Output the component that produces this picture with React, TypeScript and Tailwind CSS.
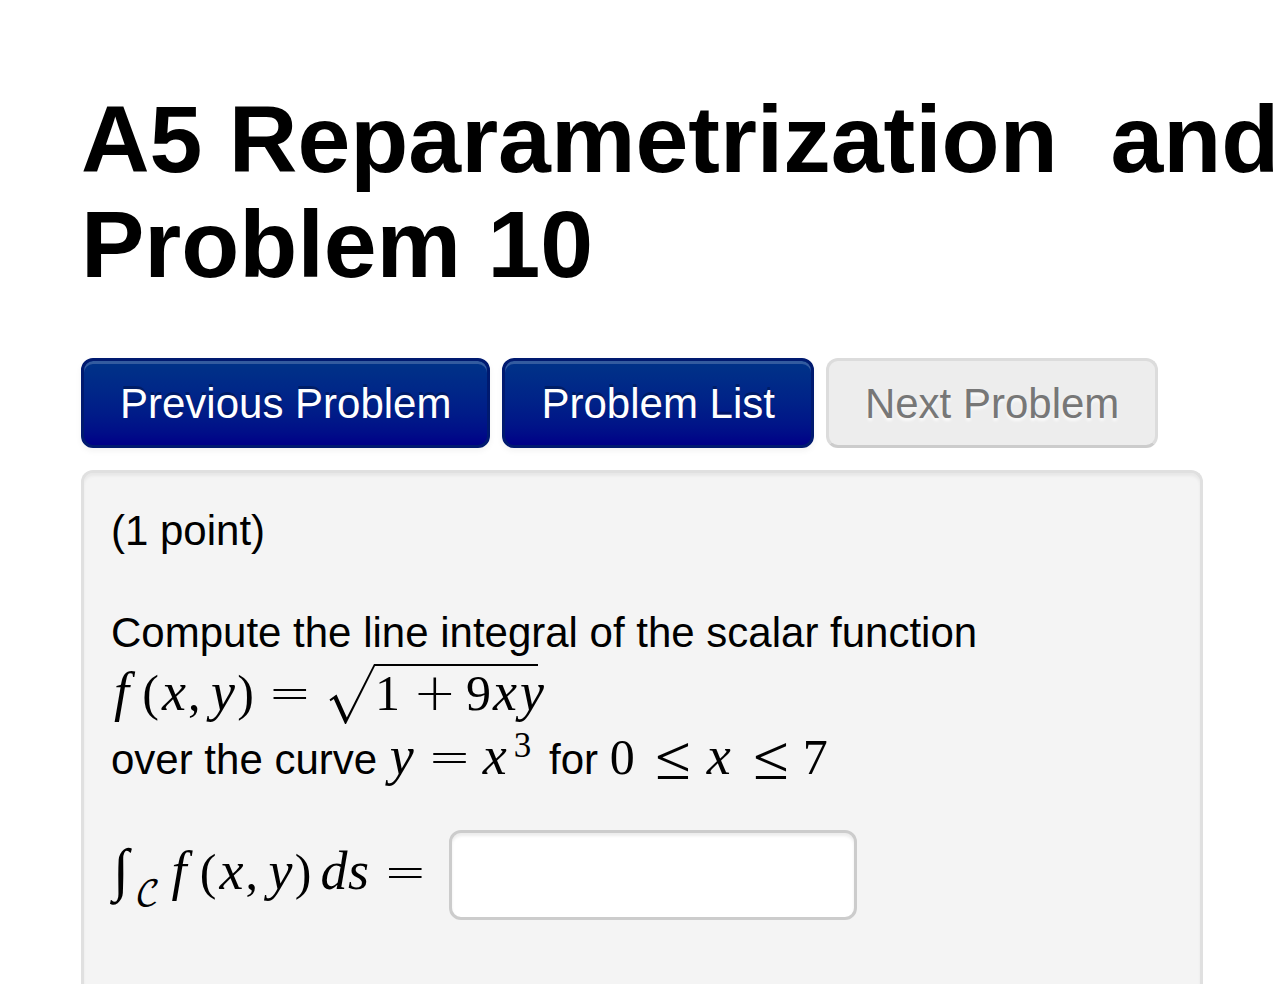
import type { ReactNode } from 'react';

const slots = {
  f: 'w-[30px] text-left pl-[3px]',
  x: 'w-[28px] text-center',
  y: 'w-[26px] text-center',
  d: 'w-[26px] text-center',
  s: 'w-[24px] text-center',
};

function Var({ name }: { name: keyof typeof slots }) {
  return <i className={`inline-block text-[54px] leading-none ${slots[name]}`}>{name}</i>;
}

function Paren({ children }: { children: ReactNode }) {
  return <span className="inline-block w-[19px] text-center">{children}</span>;
}

function Rel({ children }: { children: ReactNode }) {
  return (
    <span className="mx-[13px] inline-block w-[40px] text-center font-['DejaVu_Sans',sans-serif] text-[52px] font-extralight leading-none">
      {children}
    </span>
  );
}

function AtMost() {
  return (
    <span className="mx-[15px] inline-block w-[40px] text-center align-[-8px] font-['Inter',sans-serif] text-[72px] font-extralight leading-[30px]">
      ≤
    </span>
  );
}

function MathText({ children }: { children: ReactNode }) {
  return (
    <span className="inline-block whitespace-nowrap font-['Liberation_Serif',serif] text-[50px] leading-[60px]">
      {children}
    </span>
  );
}

function FunctionOfXY() {
  return (
    <>
      <Var name="f" />
      <Paren>(</Paren>
      <Var name="x" />
      <span className="inline-block w-[22px]">,</span>
      <Var name="y" />
      <Paren>)</Paren>
    </>
  );
}

function Root({ children }: { children: ReactNode }) {
  return (
    <span className="relative inline-block pl-[46px]">
      <svg
        className="absolute left-0 top-0 h-[62px] w-[48px]"
        viewBox="0 0 48 62"
        fill="currentColor"
        aria-hidden="true"
      >
        <path d="M0.500 36.500L7.500 31.500L17.800 54.500L45 1H47L17 61H16L4.800 36L1.500 38.200Z" />
      </svg>
      <span className="absolute left-[46px] right-[7px] top-[1px] border-t-2 border-black" />
      {children}
    </span>
  );
}

const buttonBase =
  'h-[90px] rounded-[12px] border-[3px] px-[36px] pt-[2px] text-[42px] leading-[60px] whitespace-nowrap';
const primary =
  'border-[#001a70] bg-linear-to-b from-[#003388] to-[#000088] text-white [text-shadow:0_-3px_0_rgba(0,0,0,0.25)] shadow-[inset_0_3px_0_rgba(255,255,255,0.2),0_3px_6px_rgba(0,0,0,0.05)]';

export default function App() {
  return (
    <main className="flex min-h-screen flex-col overflow-x-hidden bg-white pl-[81px] pt-[87px] font-['Liberation_Sans',Arial,sans-serif] text-[42px] leading-[60px] text-black">
      <h1 className="whitespace-nowrap text-[95px] font-bold leading-[105px]">
        A5 Reparametrization&nbsp; and
        <br />
        Problem 10
      </h1>

      <nav className="mt-[61px] flex flex-wrap gap-[12px] pr-[81px]">
        <button type="button" className={`${buttonBase} ${primary}`}>
          Previous Problem
        </button>
        <button type="button" className={`${buttonBase} ${primary}`}>
          Problem List
        </button>
        <button
          type="button"
          disabled
          className={`${buttonBase} border-[#dcdcdc] border-b-[#cccccc] bg-[#ededed] text-[#777777] [text-shadow:0_3px_3px_rgba(255,255,255,0.75)]`}
        >
          Next Problem
        </button>
      </nav>

      <section className="mr-[81px] mt-[22px] flex-1 rounded-t-[12px] border-[3px] border-b-0 border-[#e0e0e0] bg-[#f4f4f4] px-[27px] py-[28px] shadow-[inset_0_3px_3px_rgba(0,0,0,0.05)]">
        <p>(1 point)</p>
        <p className="mt-[42px]">Compute the line integral of the scalar function</p>
        <p className="h-[64px]">
          <MathText>
            <FunctionOfXY />
            <Rel>=</Rel>
            <span className="inline-block w-[8px]" />
            <Root>
              <span>1</span>
              <Rel>+</Rel>
              <span>9</span>
              <Var name="x" />
              <Var name="y" />
            </Root>
          </MathText>
        </p>
        <p className="h-[64px]">
          over the curve{' '}
          <MathText>
            <Var name="y" />
            <Rel>=</Rel>
            <Var name="x" />
            <sup className="ml-[5px] mr-[6px] text-[35px] leading-none">3</sup>
          </MathText>{' '}
          for{' '}
          <MathText>
            0<AtMost />
            <Var name="x" />
            <AtMost />7
          </MathText>
        </p>
        <div className="mt-[39px] flex items-baseline">
          <label htmlFor="answer">
            <MathText>
              <i className="inline-block w-[24px] pl-[2px] text-[58px] leading-none">∫</i>
              <sub className="align-[-8px] font-['DejaVu_Math_TeX_Gyre','DejaVu_Serif',serif] text-[35px] leading-none">𝒞</sub>
              <span className="inline-block w-[8px]" />
              <FunctionOfXY />
              <span className="inline-block w-[8px]" />
              <Var name="d" />
              <Var name="s" />
              <Rel>=</Rel>
            </MathText>
          </label>
          <input
            id="answer"
            type="text"
            className="ml-[13px] h-[90px] w-[408px] rounded-[12px] border-[3px] border-[#cccccc] bg-white px-[18px] shadow-[inset_0_3px_3px_rgba(0,0,0,0.075)]"
          />
        </div>
      </section>
    </main>
  );
}
